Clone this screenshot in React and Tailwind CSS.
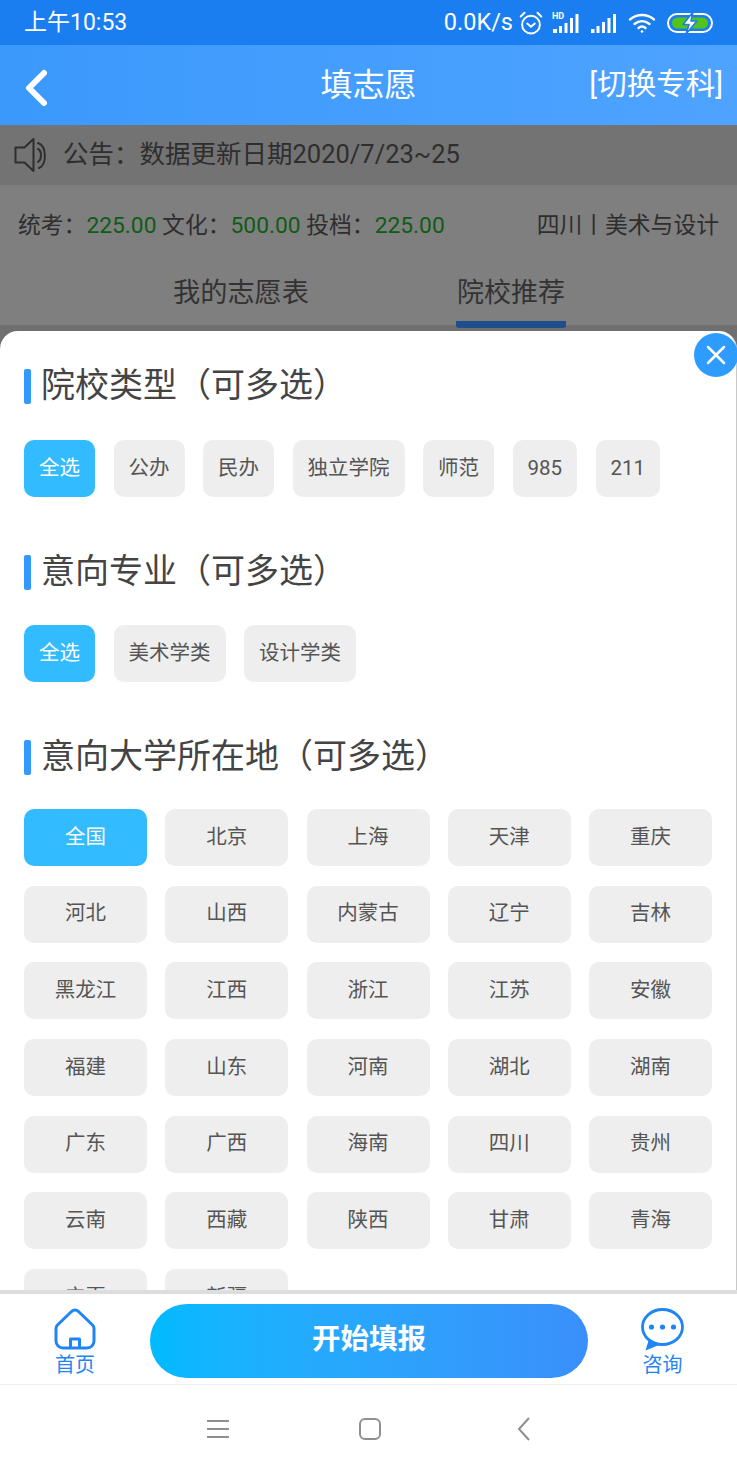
import React from 'react';

const schoolTypes = ['全选', '公办', '民办', '独立学院', '师范', '985', '211'];
const majors = ['全选', '美术学类', '设计学类'];
const regions = [
  '全国', '北京', '上海', '天津', '重庆',
  '河北', '山西', '内蒙古', '辽宁', '吉林',
  '黑龙江', '江西', '浙江', '江苏', '安徽',
  '福建', '山东', '河南', '湖北', '湖南',
  '广东', '广西', '海南', '四川', '贵州',
  '云南', '西藏', '陕西', '甘肃', '青海',
  '宁夏', '新疆',
];

function Chip({ label, active, full }) {
  return (
    <div
      className={`flex h-[57px] items-center justify-center rounded-[10px] pb-[1px] text-[20.5px] ${full ? 'w-full' : 'px-[15px]'} ${active ? 'bg-[#33bbff] text-white' : 'bg-[#eeeeee] text-[#555555]'}`}
    >
      {label}
    </div>
  );
}

function SectionTitle({ children }) {
  return (
    <div className="flex h-[36px] items-center gap-[10px]">
      <span className="h-[35px] w-[7px] rounded-[2px] bg-[#3399ff]"></span>
      <h2 className="-mt-[3px] text-[34px] leading-[36px] font-normal text-[#444444]">{children}</h2>
    </div>
  );
}

function StatusIcons() {
  return (
    <div className="flex items-center gap-[8px]">
      {/* alarm */}
      <svg width="26" height="26" viewBox="0 0 24 24" fill="none" stroke="white" strokeWidth="1.8" strokeLinecap="round">
        <circle cx="12" cy="13.5" r="8.2" />
        <path d="M8.5 12.5l3.5 3 3.5-3" />
        <path d="M2.5 6L6 2.5M21.5 6L18 2.5" />
      </svg>
      {/* HD signal */}
      <svg width="30" height="24" viewBox="0 0 30 24" fill="white">
        <text x="0" y="8" fontSize="9" fontWeight="700" fill="white" fontFamily="Roboto, sans-serif">HD</text>
        <rect x="1" y="18" width="4" height="4" />
        <rect x="7" y="15" width="3" height="7" />
        <rect x="12.5" y="12" width="3" height="10" />
        <rect x="18" y="7" width="3" height="15" />
        <rect x="23.5" y="3" width="3" height="19" />
      </svg>
      {/* signal */}
      <svg width="29" height="24" viewBox="0 0 29 24" fill="white">
        <rect x="1" y="18" width="3.5" height="4" />
        <rect x="6.5" y="15" width="3" height="7" />
        <rect x="12" y="11" width="3" height="11" />
        <rect x="17.5" y="7" width="3" height="15" />
        <rect x="23" y="3" width="3" height="19" />
      </svg>
      {/* wifi */}
      <svg width="30" height="24" viewBox="0 0 30 24" fill="none" stroke="white" strokeWidth="2.4" strokeLinecap="round">
        <path d="M3 8.5c7-6 17-6 24 0" />
        <path d="M7.5 13c4.500-3.800 10.500-3.800 15 0" />
        <path d="M11.500 17c2-1.600 5-1.600 7 0" />
        <circle cx="15" cy="20.500" r="1.300" fill="white" stroke="none" />
      </svg>
      {/* battery */}
      <svg className="ml-[2px]" width="46" height="22" viewBox="0 0 46 22" fill="none">
        <rect x="1" y="2" width="44" height="18" rx="9" stroke="white" strokeWidth="2" />
        <rect x="5" y="5.500" width="36" height="11" rx="5.500" fill="#52c41a" />
        <path d="M26 0L16 12.500h6L19 22l11-13h-6z" fill="white" stroke="#1a7df0" strokeWidth="1.600" strokeLinejoin="round" />
      </svg>
    </div>
  );
}

export default function App() {
  return (
    <div className="flex h-[1473px] w-[737px] flex-col overflow-hidden bg-white font-['Roboto','Noto_Sans_CJK_SC',sans-serif]">
      {/* Status bar */}
      <div className="flex h-[45px] items-center justify-between bg-[#1a7df0] px-[24px] text-white">
        <span className="text-[23px] leading-none">上午10:53</span>
        <div className="flex items-center gap-[5px]">
          <span className="text-[23.5px] leading-none">0.0K/s</span>
          <StatusIcons />
        </div>
      </div>

      {/* Title bar */}
      <div className="relative flex h-[80px] items-center justify-center bg-gradient-to-r from-[#3b99fc] to-[#4ea3ff] text-white">
        <svg className="absolute top-[24px] left-[24px]" width="26" height="38" viewBox="0 0 26 38" fill="none" stroke="white" strokeWidth="6" strokeLinecap="round" strokeLinejoin="round">
          <path d="M20 4L5 19l15 15" />
        </svg>
        <span className="text-[32px] leading-none">填志愿</span>
        <span className="absolute right-[14px] text-[29.5px] leading-none">[切换专科]</span>
      </div>

      {/* Dimmed page behind the sheet */}
      <div className="flex h-[60px] items-center gap-[10px] bg-[#737373] pl-[14px] text-[#2e2e2e]">
        <svg width="39" height="36" viewBox="0 0 39 36" fill="none" stroke="#2e2e2e" strokeWidth="2">
          <path d="M1.500 10.500h9L19.500 2v32l-9-8.500h-9z" strokeLinejoin="round" />
          <path d="M24 12c4 2 4 10 0 13" strokeLinecap="round" />
          <path d="M24 6c9 3 9 22 1 25" strokeLinecap="round" />
        </svg>
        <span className="text-[25.5px] leading-none">公告：数据更新日期2020/7/23~25</span>
      </div>
      <div className="h-[146px] bg-[#6f6f6f]">
        <div className="flex h-[140px] flex-col bg-[#7f7f7f]">
          <div className="flex h-[82px] shrink-0 items-center justify-between px-[18px] text-[22.8px] leading-none text-[#2e2e2e]">
            <span>
              统考：<span className="text-[#0e5c14]">225.00</span> 文化：<span className="text-[#0e5c14]">500.00</span> 投档：<span className="text-[#0e5c14]">225.00</span>
            </span>
            <span>四川丨美术与设计</span>
          </div>
          <div className="flex">
            <div className="flex w-[456px] justify-center pt-[8px] pl-[26px] text-[27.2px] leading-[36px] text-[#333333]">我的志愿表</div>
            <div className="flex w-[110px] flex-col items-center pt-[8px]">
              <span className="text-[27px] leading-[36px] text-[#333333]">院校推荐</span>
              <span className="mt-[10px] h-[7px] w-[110px] rounded-b-[3px] bg-[#1f4e8c]"></span>
            </div>
          </div>
        </div>
      </div>

      {/* Filter sheet */}
      <div className="relative flex min-h-0 flex-1 flex-col bg-[#6f6f6f]">
        <div className="min-h-0 flex-1 overflow-hidden rounded-t-[18px] border-r border-[#c8c8c8] bg-white pt-[37px] pl-[24px]">
          <SectionTitle>院校类型（可多选）</SectionTitle>
          <div className="mt-[36px] flex gap-[18.5px]">
            {schoolTypes.map((t, i) => (
              <Chip key={t} label={t} active={i === 0} />
            ))}
          </div>
          <div className="mt-[57px]">
            <SectionTitle>意向专业（可多选）</SectionTitle>
          </div>
          <div className="mt-[35px] flex gap-[18.5px]">
            {majors.map((t, i) => (
              <Chip key={t} label={t} active={i === 0} />
            ))}
          </div>
          <div className="mt-[57px]">
            <SectionTitle>意向大学所在地（可多选）</SectionTitle>
          </div>
          <div className="mt-[34px] grid w-[688px] grid-cols-5 gap-x-[18.250px] gap-y-[19.700px]">
            {regions.map((r, i) => (
              <Chip key={r} label={r} active={i === 0} full />
            ))}
          </div>
        </div>
        <div className="absolute top-[2px] right-[-1px] flex h-[44px] w-[44px] items-center justify-center rounded-full bg-[#2e9bff]">
          <svg width="20" height="20" viewBox="0 0 20 20" fill="none" stroke="white" strokeWidth="2.500" strokeLinecap="round">
            <path d="M2 2l16 16M18 2L2 18" />
          </svg>
        </div>
      </div>

      {/* Bottom action bar */}
      <div className="flex h-[95px] items-center border-t-[4px] border-b border-t-[#dddddd] border-b-[#eeeeee] bg-white pt-[4px]">
        <div className="flex w-[150px] flex-col items-center self-start pt-[10px] text-[#1f85f5]">
          <svg width="42" height="42" viewBox="0 0 42 42" fill="none" stroke="#1f85f5" strokeWidth="3" strokeLinejoin="round">
            <path d="M3.500 17L17.500 3.500Q21 .5 24.500 3.500L38.500 17Q40 18.500 40 20.500V33a7 7 0 0 1-7 7H9a7 7 0 0 1-7-7V20.500Q2 18.500 3.500 17z" />
            <path d="M16.500 40V31h9v9" />
          </svg>
          <span className="mt-[3px] text-[20px] leading-[24px]">首页</span>
        </div>
        <div className="flex h-[74px] w-[438px] items-center justify-center rounded-full bg-gradient-to-r from-[#00baff] to-[#3a8ffa] pb-[2px] text-[28.5px] font-bold text-white">
          开始填报
        </div>
        <div className="flex flex-1 flex-col items-center self-start pt-[9px] text-[#1f85f5]">
          <svg width="46" height="44" viewBox="0 0 46 44" fill="none">
            <ellipse cx="22.500" cy="20" rx="20" ry="17.500" stroke="#1f85f5" strokeWidth="2.800" />
            <path d="M9 32L5.500 43.500 19 38z" fill="#1f85f5" />
            <circle cx="11.500" cy="20" r="2.600" fill="#1f85f5" />
            <circle cx="22.500" cy="20" r="2.600" fill="#1f85f5" />
            <circle cx="33.500" cy="20" r="2.600" fill="#1f85f5" />
          </svg>
          <span className="mt-[2px] text-[20px] leading-[24px]">咨询</span>
        </div>
      </div>

      {/* System navigation */}
      <div className="flex h-[88px] items-center justify-center bg-white">
        <div className="flex items-center">
          <svg width="22" height="20" viewBox="0 0 22 20" stroke="#8f8f8f" strokeWidth="2">
            <path d="M0 2h22M0 10h22M0 18h22" />
          </svg>
          <svg className="ml-[130px]" width="22" height="22" viewBox="0 0 22 22" fill="none" stroke="#8f8f8f" strokeWidth="2">
            <rect x="1" y="1" width="20" height="20" rx="5" />
          </svg>
          <svg className="ml-[136px]" width="14" height="24" viewBox="0 0 14 24" fill="none" stroke="#8f8f8f" strokeWidth="2">
            <path d="M12 1L2 12l10 11" />
          </svg>
        </div>
      </div>
    </div>
  );
}
